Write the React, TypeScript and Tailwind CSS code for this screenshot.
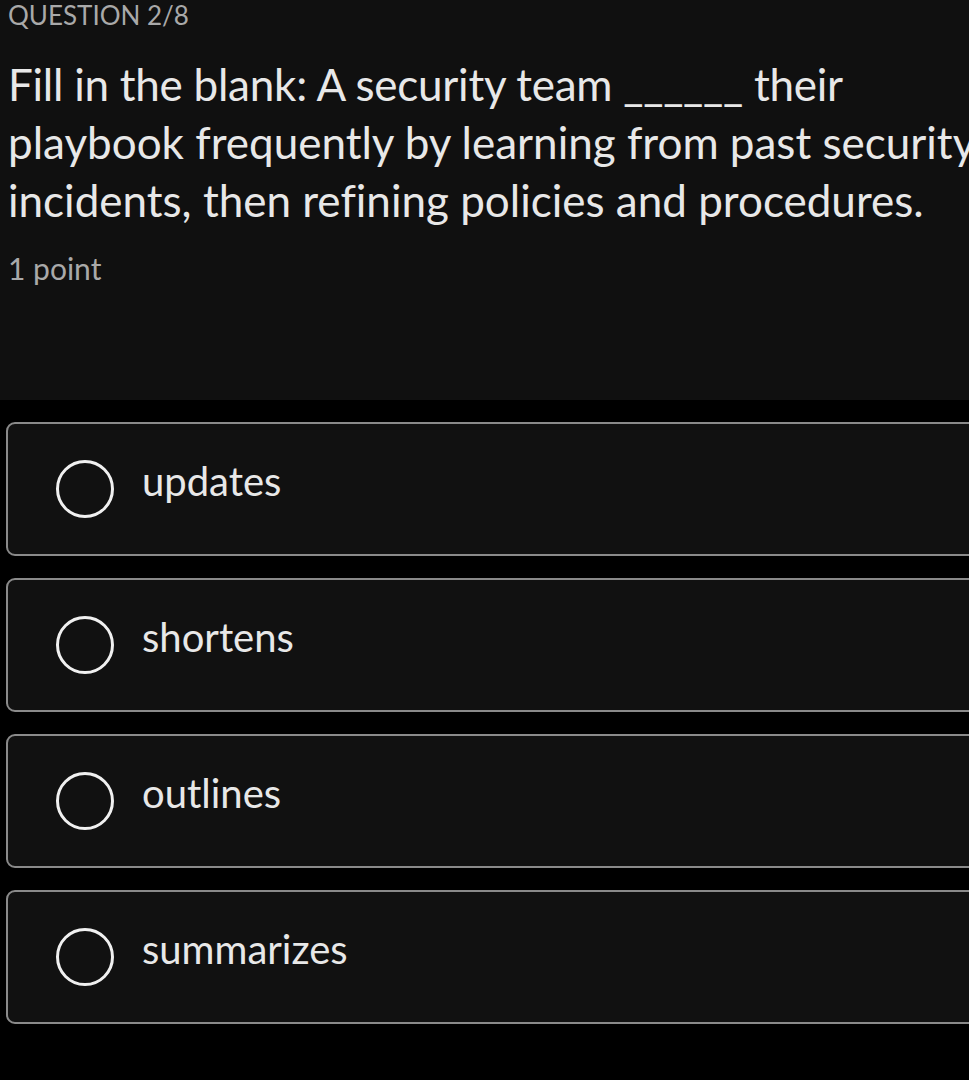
const OPTIONS = ['updates', 'shortens', 'outlines', 'summarizes']

export default function App() {
  return (
    <div className="h-[1080px] w-[969px] overflow-hidden bg-black font-['Lato',sans-serif] [font-variant-ligatures:none]">
      <div className="h-[400px] bg-[#101010] pl-2">
        <div className="pt-[2px] text-[26px] leading-[26px] text-[#a9a9a9]">QUESTION 2/8</div>
        <div className="mt-[27px] whitespace-nowrap text-[44px] leading-[58px] text-[#e8e8e8]">
          <span className="tracking-[-0.25px]">Fill in the blank: A security team ______ their</span>
          <br />
          playbook frequently by learning from past security
          <br />
          incidents, then refining policies and procedures.
        </div>
        <div className="mt-[24px] text-[30px] leading-[30px] text-[#a9a9a9]">1 point</div>
      </div>
      <div className="flex flex-col gap-[22px] pl-[6px] pt-[22px]">
        {OPTIONS.map((o) => (
          <div
            key={o}
            className="flex h-[134px] w-[1000px] items-center rounded-[9px] border-2 border-[#8a8a8a] bg-[#111111] pl-[48px]"
          >
            <span className="h-[58px] w-[58px] shrink-0 rounded-full border-[3px] border-[#f0f0f0]" />
            <span className="ml-[28px] pb-[16px] text-[40px] leading-[48px] text-[#e8e8e8]">{o}</span>
          </div>
        ))}
      </div>
    </div>
  )
}
